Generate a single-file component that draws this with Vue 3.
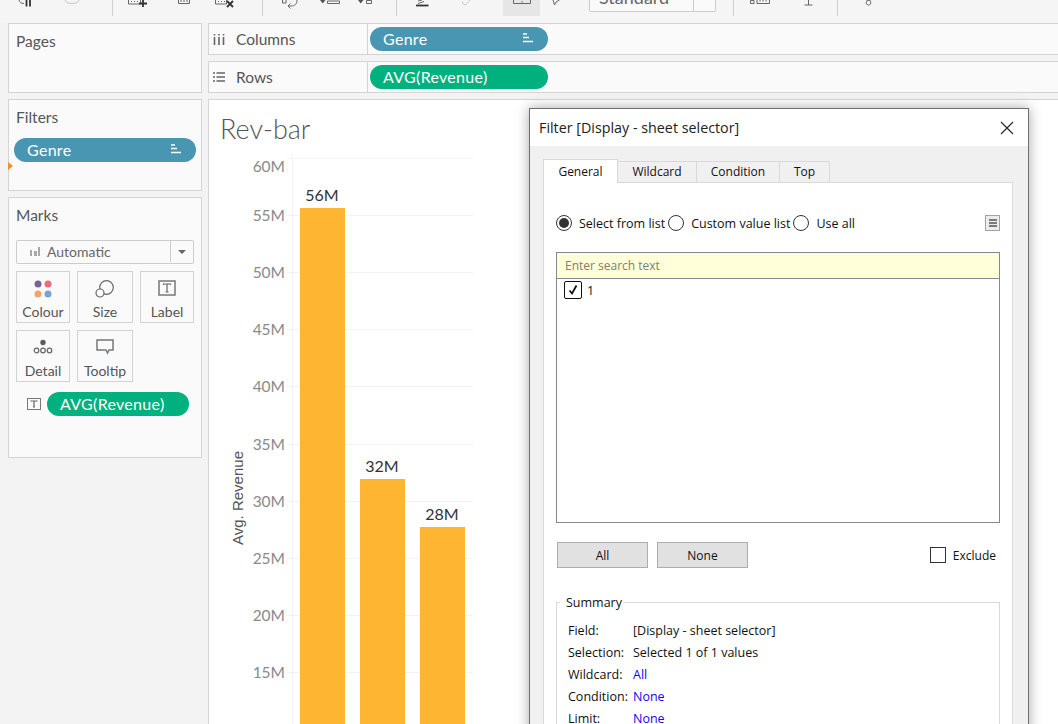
<template>
  <div class="page">
    <div class="toolbar">
      <template v-for="(t, i) in tools" :key="i">
        <span v-if="t.sep" class="sep"></span>
        <div v-else-if="t.select" class="fit-select">
          <span class="fit-text">Standard</span>
          <span class="fit-arrow"></span>
        </div>
        <div v-else class="tool" :class="{ on: t.on }" :style="{ width: t.w + 'px' }">
          <svg v-if="t.iw" :width="t.iw" height="10" :viewBox="`0 0 ${t.iw} 10`">
            <path v-if="t.d" :d="t.d" class="ico" :class="{ faint: t.faint }" />
            <path v-if="t.heavy" :d="t.heavy" class="ico heavy" />
            <path v-if="t.solid" :d="t.solid" class="solid" />
          </svg>
        </div>
      </template>
    </div>

    <div class="workspace">
      <aside class="side">
        <section class="card pages-card">
          <h3>Pages</h3>
        </section>
        <section class="card filters-card">
          <h3>Filters</h3>
          <div class="pill blue wide">
            <span>Genre</span>
            <svg class="sort" width="11" height="10" viewBox="0 0 11 10"><path d="M0 1h4M0 4.500h6M0 8.500h10" /></svg>
          </div>
          <span class="drop-mark"></span>
        </section>
        <section class="card marks-card">
          <h3>Marks</h3>
          <div class="mark-select">
            <svg width="11" height="9" viewBox="0 0 11 9"><path d="M0 3h2v6H0zM4 4h3v5H4zM8 0h2v9H8z" fill="#a8a8a8" /></svg>
            <span class="mark-text">Automatic</span>
            <span class="mark-arrow"></span>
          </div>
          <div class="mark-grid">
            <div class="mark-btn">
              <svg width="18" height="18" viewBox="0 0 18 18">
                <circle cx="4" cy="4" r="3.500" fill="#7b6394" />
                <circle cx="14" cy="4" r="3.500" fill="#ec6a7b" />
                <circle cx="4" cy="14" r="3.500" fill="#f3a36c" />
                <circle cx="14" cy="14" r="3.500" fill="#7aa3d1" />
              </svg>
              <span>Colour</span>
            </div>
            <div class="mark-btn">
              <svg width="20" height="18" viewBox="0 0 20 18"><circle cx="11.500" cy="7.500" r="6.800" class="line" /><circle cx="5" cy="13" r="4" fill="#fafafa" stroke="#666" stroke-width="1.200" /></svg>
              <span>Size</span>
            </div>
            <div class="mark-btn">
              <svg width="18" height="18" viewBox="0 0 18 18"><rect x="1" y="1" width="16" height="14" class="frame" /><path d="M5.500 5V4h7v1M9 4v8M7.500 12h3" class="line" /></svg>
              <span>Label</span>
            </div>
            <div class="mark-btn">
              <svg width="20" height="18" viewBox="0 0 20 18">
                <circle cx="10" cy="3.500" r="2.700" fill="#5c5c5c" />
                <circle cx="3.500" cy="11.500" r="2.300" class="line" />
                <circle cx="10" cy="11.500" r="2.300" class="line" />
                <circle cx="16.500" cy="11.500" r="2.300" class="line" />
              </svg>
              <span>Detail</span>
            </div>
            <div class="mark-btn">
              <svg width="18" height="18" viewBox="0 0 18 18"><path d="M1 1h16v10h-4l-1.500 3-1.500-3H1z" class="frame" /></svg>
              <span>Tooltip</span>
            </div>
          </div>
          <div class="mark-field">
            <svg width="14" height="12" viewBox="0 0 14 12"><rect x=".5" y=".5" width="13" height="11" fill="none" stroke="#777" /><path d="M4 3.500V3h6v.5M7 3v6M6 9h2" class="line" /></svg>
            <div class="pill green field-pill"><span>AVG(Revenue)</span></div>
          </div>
        </section>
      </aside>

      <main class="main">
        <div class="shelf">
          <div class="shelf-name">
            <svg width="12" height="11" viewBox="0 0 12 11"><path d="M1.500 3v8M6 3v8M10.500 3v8M1.500 0v1.500M6 0v1.500M10.500 0v1.500" stroke="#666" stroke-width="1.600" /></svg>
            <span>Columns</span>
          </div>
          <div class="shelf-body">
            <div class="pill blue shelf-pill">
              <span>Genre</span>
              <svg class="sort" width="11" height="10" viewBox="0 0 11 10"><path d="M0 1h4M0 4.500h6M0 8.500h10" /></svg>
            </div>
          </div>
        </div>
        <div class="shelf">
          <div class="shelf-name">
            <svg width="12" height="10" viewBox="0 0 12 10"><path d="M0 1h2M0 5h2M0 9h2M3.500 1H12M3.500 5H12M3.500 9H12" stroke="#666" stroke-width="1.500" /></svg>
            <span>Rows</span>
          </div>
          <div class="shelf-body">
            <div class="pill green shelf-pill"><span>AVG(Revenue)</span></div>
          </div>
        </div>

        <div class="view">
          <h1 class="sheet-title">Rev-bar</h1>
          <svg class="chart" width="322" height="580" viewBox="0 0 322 580">
            <text class="axis-title" transform="translate(34 354) rotate(-90)" text-anchor="middle">Avg. Revenue</text>
            <path d="M83.500 10V580" class="grid" />
            <g v-for="t in ticks" :key="t.label">
              <path :d="`M78 ${t.y + 0.5}H264`" class="grid" />
              <text class="tick" x="76" :y="t.labelY" text-anchor="end">{{ t.label }}</text>
            </g>
            <g v-for="b in bars" :key="b.label">
              <rect :x="b.x" :y="b.y" width="45" :height="580 - b.y" fill="#feb632" />
              <text class="bar-label" :x="b.x + 22" :y="b.y - 7" text-anchor="middle">{{ b.label }}</text>
            </g>
          </svg>
        </div>
      </main>
    </div>

    <div class="dialog">
      <div class="dialog-title">
        <span>Filter [Display - sheet selector]</span>
        <svg width="14" height="14" viewBox="0 0 14 14"><path d="M1 1l12 12M13 1L1 13" stroke="#222" stroke-width="1.100" fill="none" /></svg>
      </div>
      <div class="dialog-body">
        <div class="tabs">
          <span class="tab active">General</span>
          <span class="tab">Wildcard</span>
          <span class="tab">Condition</span>
          <span class="tab">Top</span>
        </div>
        <div class="panel">
          <div class="radio-row">
            <label class="radio on"><i></i>Select from list</label>
            <label class="radio"><i></i>Custom value list</label>
            <label class="radio"><i></i>Use all</label>
            <span class="list-btn">
              <svg width="8" height="8" viewBox="0 0 8 8"><path d="M0 1h8M0 4h8M0 7h8" stroke="#555" stroke-width="1.400" /></svg>
            </span>
          </div>
          <div class="listbox">
            <div class="search">Enter search text</div>
            <div class="list-item">
              <span class="check">
                <svg width="12" height="12" viewBox="0 0 12 12"><path d="M2.500 6.500l2.500 3 4.500-8" fill="none" stroke="#111" stroke-width="1.800" /></svg>
              </span>
              <span>1</span>
            </div>
          </div>
          <div class="btn-row">
            <span class="btn">All</span>
            <span class="btn">None</span>
            <label class="exclude"><i></i>Exclude</label>
          </div>
          <fieldset class="summary">
            <legend>Summary</legend>
            <div v-for="r in summary" :key="r.name" class="sum-row">
              <span class="sum-name">{{ r.name }}</span>
              <span :class="{ link: r.link }">{{ r.value }}</span>
            </div>
          </fieldset>
        </div>
      </div>
    </div>
  </div>
</template>

<script setup>
// toolbar is cut off by the top of the screenshot, only icon bottoms show
const tools = [
  { w: 50, iw: 20, d: 'M4 0c.5 2 2 3.500 5 3.500', heavy: 'M11.500 0v6.500M15 0v6.500' },
  { w: 44, iw: 18, d: 'M2 0c1 2.500 3.500 3.500 7 3.500s6-1 7-3.500', faint: true },
  { w: 18 },
  { sep: true },
  { w: 50, iw: 20, d: 'M.5 0v4h12V0M3 1.500h1M6 1.500h1M9 1.500h1', heavy: 'M11 3.500h8M15 0v7' },
  { w: 41, iw: 14, d: 'M1.500 0v3.500h11V0M4 0v2M7 0v2M10 0v2' },
  { w: 41, iw: 20, d: 'M.5 0v4h11V0M3 1.500h1M6 1.500h1M9 1.500h1', heavy: 'M12 1l6 6M18 1l-6 6' },
  { w: 17 },
  { sep: true },
  { w: 54, iw: 18, d: 'M1.500 0v3h3.500V0M7 6h3c4 0 6-2 6-6M9.500 3.500L7 6l2.500 2.500' },
  { w: 26, iw: 20, d: 'M7.500 1h12v2.500h-12z', solid: 'M0 0h5.500L2.750 3.500z' },
  { w: 46, iw: 16, d: 'M8.500 .5h5v3h-5z', solid: 'M0 0h5.500L2.750 3.500z' },
  { w: 7 },
  { sep: true },
  { w: 52, iw: 14, d: 'M2 3.500l6-2M2 1l4-1', heavy: 'M0 5.500h12.500' },
  { w: 36, iw: 12, d: 'M1.500 1.500a2.500 2.500 0 0 0 4.500 2L9 0', faint: true },
  { w: 18 },
  { w: 37, on: true, iw: 18, d: 'M.5 0v3.500h17V0M9 1v1.500' },
  { w: 32, iw: 10, d: 'M2 0l1.500 5 1.500-3L8.500 0' },
  { w: 17 },
  { select: true },
  { w: 17 },
  { sep: true },
  { w: 52, iw: 20, d: 'M.5 .5h3.500v3H.5zM7 0v3.500h12.500V0M10 0v1.500M13 0v1.500M16 0v1.500' },
  { w: 45, iw: 9, d: 'M4.500 0v5M.5 5h8' },
  { w: 6 },
  { sep: true },
  { w: 60, iw: 7, d: 'M3.500 .5a2.300 2.300 0 1 0 .01 0M1 0h5' },
]

const tickLabels = ['60M', '55M', '50M', '45M', '40M', '35M', '30M', '25M', '20M', '15M']

const ticks = tickLabels.map((label, i) => {
  const y = Math.round(14 + i * 57.1)
  return { label, y, labelY: i === 0 ? y + 14 : y + 6 }
})

const bars = [
  { label: '56M', x: 91, y: 64 },
  { label: '32M', x: 151, y: 335 },
  { label: '28M', x: 211, y: 383 },
]

const summary = [
  { name: 'Field:', value: '[Display - sheet selector]' },
  { name: 'Selection:', value: 'Selected 1 of 1 values' },
  { name: 'Wildcard:', value: 'All', link: true },
  { name: 'Condition:', value: 'None', link: true },
  { name: 'Limit:', value: 'None', link: true },
]
</script>

<style>
html,
body {
  margin: 0;
  overflow: hidden;
}
</style>

<style scoped>
.page {
  position: relative;
  width: 1058px;
  height: 724px;
  overflow: hidden;
  background: #f3f3f3;
  font-family: Lato, "Liberation Sans", sans-serif;
  color: #444;
}

.toolbar {
  display: flex;
  align-items: flex-start;
  height: 23px;
  background: #f5f5f5;
  overflow: hidden;
}

.tool {
  display: flex;
  justify-content: center;
  height: 16px;
  flex: none;
}

.tool.on {
  background: #e6e6e6;
}

.ico {
  fill: none;
  stroke: #666;
  stroke-width: 1;
}

.ico.heavy {
  stroke: #333;
  stroke-width: 1.800;
}

.ico.faint {
  stroke: #c4c4c4;
}

.solid {
  fill: #555;
}

.sep {
  flex: none;
  width: 1px;
  height: 16px;
  background: #cfcfcf;
}

.fit-select {
  display: flex;
  flex: none;
  justify-content: space-between;
  box-sizing: border-box;
  width: 127px;
  height: 12px;
  border: 1px solid #ccc;
  border-top: none;
  border-radius: 0 0 2px 2px;
  background: #fafafa;
  overflow: hidden;
}

.fit-text {
  margin: -14px 0 0 9px;
  font-size: 18px;
  line-height: 22px;
  color: #666;
}

.fit-arrow {
  width: 21px;
  border-left: 1px solid #ccc;
}

.workspace {
  display: flex;
  height: 701px;
  padding-left: 8px;
}

.side {
  display: flex;
  flex-direction: column;
  gap: 6px;
  flex: none;
  width: 194px;
  margin-right: 6px;
}

.card {
  position: relative;
  box-sizing: border-box;
  border: 1px solid #d4d4d4;
  background: #fafafa;
  padding: 7px 7px 0;
}

.card h3 {
  margin: 0;
  font-size: 15.500px;
  font-weight: 400;
  line-height: 20px;
  color: #555;
}

.pages-card {
  height: 70px;
}

.filters-card {
  height: 92px;
}

.marks-card {
  height: 261px;
}

.pill {
  display: flex;
  align-items: center;
  justify-content: space-between;
  box-sizing: border-box;
  height: 24px;
  padding-bottom: 2px;
  border-radius: 12px;
  font-size: 16px;
  letter-spacing: 0.3px;
  color: #fff;
}

.blue {
  background: #4996b2;
}

.green {
  background: #00b180;
}

.sort {
  stroke: #fff;
  stroke-width: 1.500;
  fill: none;
}

.pill.wide {
  width: 182px;
  margin: 11px 0 0 -2px;
  padding-left: 13px;
  padding-right: 14px;
}

.drop-mark {
  position: absolute;
  left: -1px;
  top: 62px;
  border-left: 5px solid #f28e2b;
  border-top: 4px solid transparent;
  border-bottom: 4px solid transparent;
}

.mark-select {
  display: flex;
  align-items: center;
  box-sizing: border-box;
  width: 178px;
  height: 24px;
  margin-top: 15px;
  border: 1px solid #ccc;
  border-radius: 2px;
  background: #fafafa;
  padding: 0 0 1px 13px;
  font-size: 14px;
  color: #666;
}

.mark-text {
  flex: 1;
  margin-left: 6px;
}

.mark-arrow {
  position: relative;
  align-self: stretch;
  width: 22px;
  border-left: 1px solid #ccc;
}

.mark-arrow::after {
  content: "";
  position: absolute;
  left: 7px;
  top: 9px;
  border-top: 4px solid #666;
  border-left: 4px solid transparent;
  border-right: 4px solid transparent;
}

.mark-grid {
  display: grid;
  grid-template-columns: 54px 56px 54px;
  grid-auto-rows: 52px;
  gap: 7px;
  margin-top: 7px;
}

.mark-btn {
  display: flex;
  flex-direction: column;
  align-items: center;
  justify-content: space-between;
  box-sizing: border-box;
  border: 1px solid #d2d2d2;
  padding: 8px 0 2px;
  font-size: 14px;
  color: #555;
}

.line {
  fill: none;
  stroke: #666;
  stroke-width: 1.200;
}

.frame {
  fill: none;
  stroke: #777;
  stroke-width: 1.500;
}

.mark-field {
  display: flex;
  align-items: center;
  gap: 6px;
  margin: 10px 0 0 11px;
}

.field-pill {
  width: 142px;
  padding-left: 13px;
}

.main {
  flex: 1;
  display: flex;
  flex-direction: column;
  min-width: 0;
}

.shelf {
  display: flex;
  flex: none;
  box-sizing: border-box;
  height: 32px;
  margin-bottom: 6px;
  border: 1px solid #d4d4d4;
  border-right: none;
  background: #fafafa;
}

.shelf-name {
  display: flex;
  align-items: center;
  gap: 11px;
  box-sizing: border-box;
  width: 159px;
  padding-left: 4px;
  border-right: 1px solid #d4d4d4;
  font-size: 15.500px;
  color: #555;
}

.shelf-body {
  padding: 3px 2px;
}

.shelf-pill {
  width: 178px;
  padding-left: 13px;
  padding-right: 14px;
}

.view {
  flex: 1;
  border: 1px solid #d4d4d4;
  border-right: none;
  border-bottom: none;
  background: #fff;
  overflow: hidden;
}

.sheet-title {
  margin: 0;
  padding: 13px 0 0 11px;
  height: 44px;
  box-sizing: border-box;
  font-size: 27px;
  font-weight: 300;
  line-height: 32px;
  color: #555;
}

.chart {
  display: block;
}

.grid {
  stroke: #f2f2f2;
  fill: none;
}

.tick {
  font-size: 15.500px;
  fill: #8a8a8a;
}

.axis-title {
  font-family: "Liberation Sans", sans-serif;
  font-size: 15px;
  fill: #555;
}

.bar-label {
  font-size: 16px;
  fill: #333;
}

.dialog {
  position: absolute;
  left: 529px;
  top: 108px;
  box-sizing: border-box;
  width: 500px;
  height: 640px;
  border: 1px solid #6f6f6f;
  background: #f0f0f0;
  box-shadow: 0 0 12px rgba(0, 0, 0, 0.35);
  font-family: "Open Sans", "Liberation Sans", sans-serif;
  font-size: 12.500px;
  color: #111;
}

.dialog-title {
  display: flex;
  align-items: center;
  justify-content: space-between;
  height: 37px;
  padding: 0 14px 0 9px;
  background: #fff;
  font-size: 14.300px;
  color: #222;
}

.dialog-body {
  padding: 13px 15px 0 13px;
}

.tabs {
  display: grid;
  grid-template-columns: 75px 79px 83px 50px;
  align-items: end;
  height: 23px;
}

.tab {
  box-sizing: border-box;
  height: 21px;
  margin-left: -1px;
  border: 1px solid #d9d9d9;
  border-bottom: none;
  background: #f0f0f0;
  font-size: 12px;
  line-height: 20px;
  text-align: center;
}

.tab.active {
  position: relative;
  z-index: 1;
  height: 24px;
  margin-left: 0;
  margin-bottom: -1px;
  background: #fff;
  line-height: 23px;
}

.panel {
  box-sizing: border-box;
  height: 580px;
  border: 1px solid #d9d9d9;
  background: #fff;
  padding: 31px 0 0 12px;
}

.radio-row {
  display: flex;
  align-items: center;
  width: 444px;
  height: 18px;
}

.radio {
  display: flex;
  align-items: center;
  margin-right: 3px;
}

.radio i {
  position: relative;
  box-sizing: border-box;
  width: 16px;
  height: 16px;
  margin-right: 7px;
  border: 1px solid #333;
  border-radius: 50%;
  background: #fff;
}

.radio.on i::after {
  content: "";
  position: absolute;
  inset: 2px;
  border-radius: 50%;
  background: #333;
}

.list-btn {
  display: flex;
  align-items: center;
  justify-content: center;
  box-sizing: border-box;
  width: 15px;
  height: 16px;
  margin-left: auto;
  border: 1px solid #9aa5ad;
  background: #ececec;
}

.listbox {
  box-sizing: border-box;
  width: 444px;
  height: 271px;
  margin-top: 20px;
  border: 1px solid #85888c;
}

.search {
  height: 26px;
  box-sizing: border-box;
  border-bottom: 1px solid #85888c;
  background: #ffffd9;
  padding-left: 8px;
  font-size: 12px;
  line-height: 25px;
  color: #80806f;
}

.list-item {
  display: flex;
  align-items: center;
  gap: 5px;
  padding: 2px 0 0 7px;
}

.check {
  display: flex;
  align-items: center;
  justify-content: center;
  box-sizing: border-box;
  width: 18px;
  height: 18px;
  border: 1px solid #111;
  border-radius: 2px;
}

.btn-row {
  display: flex;
  align-items: center;
  gap: 9px;
  width: 439px;
  height: 26px;
  margin: 19px 0 0 1px;
}

.btn {
  box-sizing: border-box;
  width: 91px;
  height: 26px;
  border: 1px solid #adadad;
  background: #e1e1e1;
  font-size: 12px;
  text-align: center;
  line-height: 25px;
}

.exclude {
  display: flex;
  align-items: center;
  gap: 7px;
  margin-left: auto;
  font-size: 12px;
}

.exclude i {
  box-sizing: border-box;
  width: 16px;
  height: 16px;
  border: 1px solid #333;
}

.summary {
  box-sizing: border-box;
  width: 444px;
  height: 200px;
  margin: 26px 0 0;
  padding: 9px 0 0 11px;
  border: 1px solid #d9d9d9;
}

.summary legend {
  margin-left: -8px;
  padding: 0 1px 0 6px;
}

.sum-row {
  display: flex;
  height: 22px;
  line-height: 22px;
}

.sum-name {
  width: 65px;
}

.link {
  color: #1a00ff;
}
</style>
